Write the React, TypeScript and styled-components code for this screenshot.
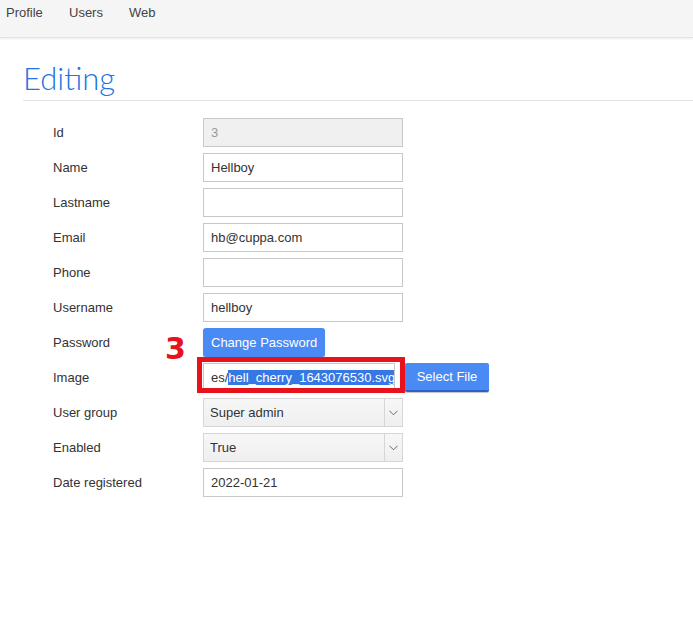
import React from "react";
import styled, { createGlobalStyle } from "styled-components";

const Global = createGlobalStyle`
  html, body { margin: 0; padding: 0; background: #fff; }
  body { font-family: "Liberation Sans", Arial, sans-serif; font-size: 13px; color: #333; }
`;

const NavBar = styled.nav`
  height: 38px;
  background: #f5f5f5;
  border-bottom: 1px solid #e3e3e3;
  box-shadow: 0 1px 2px rgba(0,0,0,0.08);
  display: flex;
  align-items: flex-start;
  padding: 5px 0 0 6px;
  box-sizing: border-box;
`;

const NavItem = styled.a<{ $w: number }>`
  width: ${p => p.$w}px;
  font-size: 13px;
  color: #444;
  text-decoration: none;
  line-height: 15px;
`;

const Main = styled.main`
  padding: 20px 0 0 23px;
`;

const Heading = styled.h1`
  margin: 0;
  font-family: "Lato", "Open Sans", sans-serif;
  font-weight: 300;
  font-size: 31px;
  line-height: 40px;
  color: #2073e8;
  padding: 0 0 2px 0;
  border-bottom: 1px solid #e2e2e2;
`;

const Form = styled.form`
  display: flex;
  flex-direction: column;
  gap: 6px;
  padding: 17px 0 0 30px;
`;

const Row = styled.div`
  display: grid;
  grid-template-columns: 150px auto;
  align-items: center;
  height: 29px;
`;

const Label = styled.label`
  font-size: 13px;
  color: #333;
`;

const Input = styled.input`
  box-sizing: border-box;
  width: 200px;
  height: 29px;
  border: 1px solid #c8c8c8;
  border-radius: 0;
  padding: 0 7px;
  font-family: "Liberation Sans", Arial, sans-serif;
  font-size: 13px;
  color: #333;
  background: #fff;
  outline: none;
  &:disabled { background: #f0f0f0; color: #999; }
`;

const BlueButton = styled.button`
  height: 29px;
  border: none;
  border-radius: 3px;
  background: #4a8af4;
  color: #fff;
  font-family: "Liberation Sans", Arial, sans-serif;
  font-size: 13px;
  padding: 0 8px;
  box-shadow: 0 1px 1px rgba(0,0,0,0.25);
  cursor: pointer;
`;

const SelectFileButton = styled(BlueButton)`
  border-bottom: 2px solid #2b62c7;
  border-radius: 2px;
  width: 84px;
  padding: 0;
  margin-left: 10px;
`;

const FileWrap = styled.div`
  position: relative;
  display: flex;
  align-items: flex-end;
  height: 29px;
`;

const FileBox = styled.div`
  box-sizing: border-box;
  width: 192px;
  height: 29px;
  border: 1px solid #c8c8c8;
  background: #fff;
  padding: 0 7px;
  display: flex;
  align-items: center;
  overflow: hidden;
  white-space: nowrap;
  font-size: 13px;
  color: #333;
`;

const Selected = styled.span`
  background: #3578e5;
  color: #fff;
`;

const RedFrame = styled.div`
  position: absolute;
  left: -6px;
  top: -6px;
  width: 208px;
  height: 36px;
  box-sizing: border-box;
  border: 5px solid #e8121c;
  pointer-events: none;
`;

const Marker = styled.span`
  position: absolute;
  left: -38px;
  top: -29px;
  font-family: "DejaVu Sans", sans-serif;
  font-weight: 900;
  font-size: 30px;
  color: #e8121c;
  line-height: 30px;
`;

const SelectBox = styled.div`
  box-sizing: border-box;
  width: 200px;
  height: 29px;
  border: 1px solid #d6d6d6;
  background: linear-gradient(#f7f7f7, #efefef);
  display: flex;
  align-items: center;
`;

const SelectText = styled.span`
  flex: 1;
  padding-left: 6px;
  font-size: 13px;
  color: #333;
`;

const SelectArrow = styled.span`
  width: 17px;
  height: 100%;
  border-left: 1px solid #d6d6d6;
  display: flex;
  align-items: center;
  justify-content: center;
`;

const Chevron = () => (
  <svg width="9" height="6" viewBox="0 0 9 6">
    <path d="M0.5 0.8 L4.5 4.8 L8.5 0.8" fill="none" stroke="#666" strokeWidth="1" />
  </svg>
);

const Select = ({ value }: { value: string }) => (
  <SelectBox>
    <SelectText>{value}</SelectText>
    <SelectArrow><Chevron /></SelectArrow>
  </SelectBox>
);

export default function App() {
  return (
    <>
      <Global />
      <NavBar>
        <NavItem $w={63} href="#">Profile</NavItem>
        <NavItem $w={60} href="#">Users</NavItem>
        <NavItem $w={40} href="#">Web</NavItem>
      </NavBar>
      <Main>
        <Heading>Editing</Heading>
        <Form>
          <Row><Label>Id</Label><Input disabled defaultValue="3" /></Row>
          <Row><Label>Name</Label><Input defaultValue="Hellboy" /></Row>
          <Row><Label>Lastname</Label><Input defaultValue="" /></Row>
          <Row><Label>Email</Label><Input defaultValue="hb@cuppa.com" /></Row>
          <Row><Label>Phone</Label><Input defaultValue="" /></Row>
          <Row><Label>Username</Label><Input defaultValue="hellboy" /></Row>
          <Row><Label>Password</Label><div><BlueButton type="button">Change Password</BlueButton></div></Row>
          <Row>
            <Label>Image</Label>
            <FileWrap>
              <FileBox>es/<Selected>hell_cherry_1643076530.svg</Selected></FileBox>
              <SelectFileButton type="button">Select File</SelectFileButton>
              <RedFrame />
              <Marker>3</Marker>
            </FileWrap>
          </Row>
          <Row><Label>User group</Label><Select value="Super admin" /></Row>
          <Row><Label>Enabled</Label><Select value="True" /></Row>
          <Row><Label>Date registered</Label><Input defaultValue="2022-01-21" /></Row>
        </Form>
      </Main>
    </>
  );
}
